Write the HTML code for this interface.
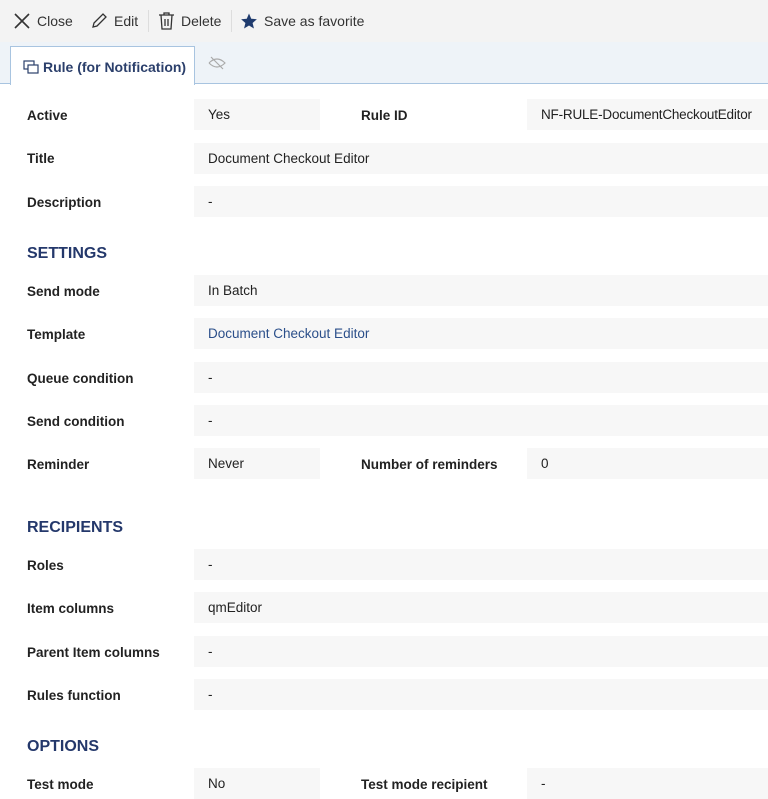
<!DOCTYPE html>
<html><head><meta charset="utf-8"><style>
*{margin:0;padding:0;box-sizing:border-box}
body{width:768px;height:796px;overflow:hidden;background:#fff;font-family:"Liberation Sans",sans-serif;font-size:13.5px;color:#222;position:relative}
.tb{position:absolute;left:0;top:0;width:768px;height:42px;background:#f3f3f3}
.tbi{position:absolute;top:12px;font-size:14px;color:#333;display:flex;align-items:center;gap:6px}
.sep{position:absolute;top:10px;width:1px;height:22px;background:#ddd}
.tabs{position:absolute;left:0;top:42px;width:768px;height:42px;background:#eef3f8;border-bottom:1px solid #a8c4e0}
.tab{position:absolute;left:10px;top:4px;width:185px;height:39px;background:#fff;border:1px solid #a8c4e0;border-bottom:none;font-weight:bold;color:#2b3f6b;font-size:14px;padding:12px 0 0 12px;white-space:nowrap}
.l{position:absolute;font-weight:bold;font-size:13.5px;color:#222;white-space:nowrap}
.v{position:absolute;height:31px;background:#f7f7f7;padding:8px 14px;font-size:13.5px;white-space:nowrap;overflow:hidden}
.h{position:absolute;left:27px;font-weight:bold;font-size:16px;color:#24386b}
</style></head><body>
<div class="tb">
 <div class="tbi" style="left:13px"><svg width="18" height="18" viewBox="0 0 18 18"><path d="M2 2L16 16M16 2L2 16" stroke="#333" stroke-width="1.6"/></svg>Close</div>
 <div class="tbi" style="left:90px"><svg width="18" height="18" viewBox="0 0 18 18"><path d="M3 15l1-4 9-9 3 3-9 9z" fill="none" stroke="#333" stroke-width="1.3"/></svg>Edit</div>
 <div class="sep" style="left:148px"></div>
 <div class="tbi" style="left:158px"><svg width="17" height="18" viewBox="0 0 17 18"><path d="M1 3h15M6 3V1h5v2M3 3l1 14h9l1-14M7 7v7M10 7v7" fill="none" stroke="#333" stroke-width="1.3"/></svg>Delete</div>
 <div class="sep" style="left:231px"></div>
 <div class="tbi" style="left:240px"><svg width="18" height="18" viewBox="0 0 24 24"><path d="M12 2l3 7 7.5.6-5.7 5 1.8 7.4L12 18l-6.6 4 1.8-7.4-5.7-5L9 9z" fill="#1f3b6e"/></svg>Save as favorite</div>
</div>
<div class="tabs">
 <div class="tab"><svg width="16" height="14" viewBox="0 0 16 14" style="vertical-align:-2px;margin-right:4px"><rect x="1" y="1" width="10" height="8" fill="none" stroke="#2b3f6b" stroke-width="1.2"/><rect x="5" y="5" width="10" height="8" fill="#fff" stroke="#2b3f6b" stroke-width="1.2"/></svg>Rule (for Notification)</div>
 <svg style="position:absolute;left:208px;top:14px" width="18" height="14" viewBox="0 0 18 14"><path d="M1 7q8-8 16 0q-8 8-16 0M3 1l12 12" fill="none" stroke="#aaa" stroke-width="1.2"/></svg>
</div>

<div class="l" style="left:27px;top:108px">Active</div><div class="v" style="left:194px;top:99px;width:126px">Yes</div>
<div class="l" style="left:361px;top:108px">Rule ID</div><div class="v" style="left:527px;top:99px;width:241px;letter-spacing:-0.2px">NF-RULE-DocumentCheckoutEditor</div>
<div class="l" style="left:27px;top:151px">Title</div><div class="v" style="left:194px;top:143px;width:574px">Document Checkout Editor</div>
<div class="l" style="left:27px;top:195px">Description</div><div class="v" style="left:194px;top:186px;width:574px">-</div>

<div class="h" style="top:245px">SETTINGS</div>
<div class="l" style="left:27px;top:284px">Send mode</div><div class="v" style="left:194px;top:275px;width:574px">In Batch</div>
<div class="l" style="left:27px;top:327px">Template</div><div class="v" style="left:194px;top:318px;width:574px;color:#2b4f8a">Document Checkout Editor</div>
<div class="l" style="left:27px;top:371px">Queue condition</div><div class="v" style="left:194px;top:362px;width:574px">-</div>
<div class="l" style="left:27px;top:414px">Send condition</div><div class="v" style="left:194px;top:405px;width:574px">-</div>
<div class="l" style="left:27px;top:457px">Reminder</div><div class="v" style="left:194px;top:448px;width:126px">Never</div>
<div class="l" style="left:361px;top:457px">Number of reminders</div><div class="v" style="left:527px;top:448px;width:241px">0</div>

<div class="h" style="top:519px">RECIPIENTS</div>
<div class="l" style="left:27px;top:558px">Roles</div><div class="v" style="left:194px;top:549px;width:574px">-</div>
<div class="l" style="left:27px;top:601px">Item columns</div><div class="v" style="left:194px;top:592px;width:574px">qmEditor</div>
<div class="l" style="left:27px;top:645px">Parent Item columns</div><div class="v" style="left:194px;top:636px;width:574px">-</div>
<div class="l" style="left:27px;top:688px">Rules function</div><div class="v" style="left:194px;top:679px;width:574px">-</div>

<div class="h" style="top:738px">OPTIONS</div>
<div class="l" style="left:27px;top:777px">Test mode</div><div class="v" style="left:194px;top:768px;width:126px">No</div>
<div class="l" style="left:361px;top:777px">Test mode recipient</div><div class="v" style="left:527px;top:768px;width:241px">-</div>
</body></html>
